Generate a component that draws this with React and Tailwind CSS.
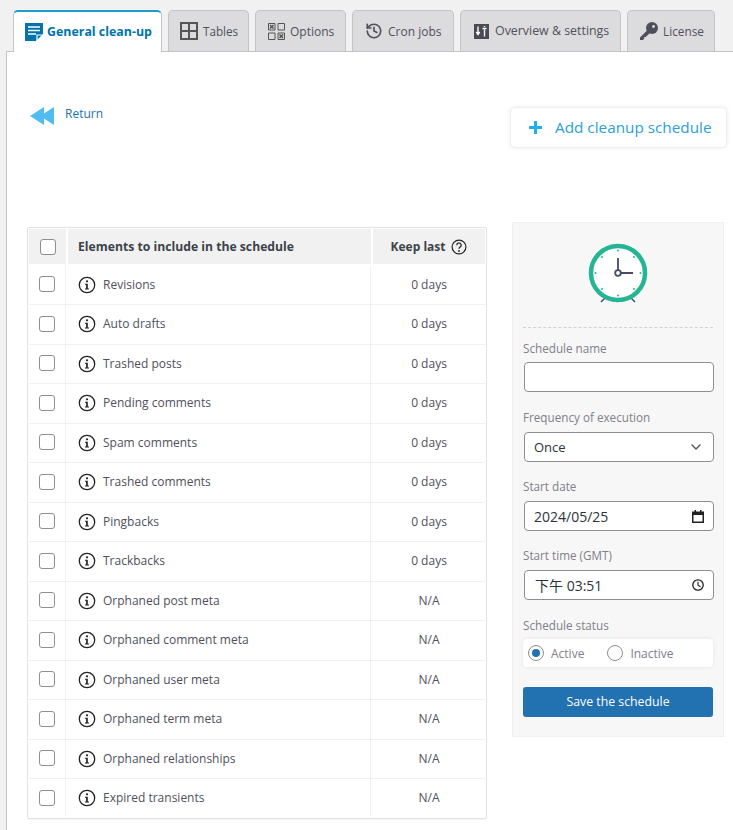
import { ChevronDown, History } from "lucide-react";

const tableRows = [
  ["Revisions", "0 days"],
  ["Auto drafts", "0 days"],
  ["Trashed posts", "0 days"],
  ["Pending comments", "0 days"],
  ["Spam comments", "0 days"],
  ["Trashed comments", "0 days"],
  ["Pingbacks", "0 days"],
  ["Trackbacks", "0 days"],
  ["Orphaned post meta", "N/A"],
  ["Orphaned comment meta", "N/A"],
  ["Orphaned user meta", "N/A"],
  ["Orphaned term meta", "N/A"],
  ["Orphaned relationships", "N/A"],
  ["Expired transients", "N/A"],
];

const DocIcon = () => (
  <svg width="18" height="18" viewBox="0 0 18 18" className="shrink-0">
    <path d="M0 0h18v11l-7 7H0z" fill="#0073aa" />
    <path d="M3 4h12M3 7.500h12M3 11h8" stroke="#fff" strokeWidth="1.400" />
    <path d="M12 18v-6h6" fill="none" stroke="#fff" strokeWidth="1.200" />
  </svg>
);

const TableIcon = () => (
  <svg width="18" height="18" viewBox="0 0 18 18" className="shrink-0">
    <path d="M1 1h16v16H1zM9 1v16M1 9h16" fill="none" stroke="#555" strokeWidth="2" />
  </svg>
);

const OptionsIcon = () => (
  <svg width="17" height="17" viewBox="0 0 17 17" className="shrink-0">
    <path d="M.5.5h6.500v6.500H.5zM10 .5h6.500v6.500H10zM.5 10h6.500v6.500H.5zM10 10h6.500v6.500H10z" fill="none" stroke="#555" />
    <path d="M2 2l3.500 3.500M5.500 2L2 5.500M11.500 11.500l3.500 3.500M15 11.500L11.500 15" stroke="#555" strokeWidth="1.600" />
  </svg>
);

const SlidersIcon = () => (
  <svg width="15" height="15" viewBox="0 0 15 15" className="shrink-0">
    <path d="M0 0h15v15H0z" fill="#4a4a55" />
    <path d="M4 2.500v7M2.300 8l1.700 2.500L5.700 8M10.500 5.500v7M8.500 4.500h4M10.500 2v1" fill="none" stroke="#fff" strokeWidth="1.400" />
  </svg>
);

const KeyIcon = () => (
  <svg width="18" height="18" viewBox="0 0 18 18" className="shrink-0">
    <circle cx="12" cy="6" r="6" fill="#4f4f5c" />
    <circle cx="13.500" cy="4.500" r="1.400" fill="#dcdcde" />
    <path d="M8.500 7L0 15.500V18h3l1.200-1.500v-1.500h1.500L11 10z" fill="#4f4f5c" />
  </svg>
);

const InfoIcon = () => (
  <svg width="18" height="18" viewBox="0 0 18 18" className="shrink-0">
    <circle cx="9" cy="9" r="7.700" fill="none" stroke="#222" strokeWidth="1.300" />
    <circle cx="9" cy="5.300" r="1.100" fill="#222" />
    <path d="M7 7.800h2.800v4.700H11v1H7v-1h1.100V8.800H7z" fill="#222" />
  </svg>
);

const HelpIcon = () => (
  <svg width="16" height="16" viewBox="0 0 16 16" className="shrink-0">
    <circle cx="8" cy="8" r="6.900" fill="none" stroke="#222" strokeWidth="1.200" />
    <path d="M5.800 6.200a2.200 2.200 0 1 1 3.400 1.800c-.8.500-1.200 1-1.200 1.800" fill="none" stroke="#222" strokeWidth="1.300" />
    <circle cx="8" cy="12" r=".9" fill="#222" />
  </svg>
);

const ReturnIcon = () => (
  <svg width="24" height="18" viewBox="0 0 24 18">
    <path d="M0 9l14-9v18z" fill="#4fbdf2" />
    <path d="M10 9l14-9v18z" fill="#4fbdf2" />
  </svg>
);

const CalendarIcon = () => (
  <svg width="12" height="13" viewBox="0 0 12 13">
    <path d="M0 1.500h12V13H0z" fill="#222" />
    <path d="M1.500 5h9v6.500h-9z" fill="#fff" />
    <path d="M2.500 0h1.500v2H2.500zM8 0h1.500v2H8z" fill="#222" />
  </svg>
);

const TimeIcon = () => (
  <svg width="12" height="12" viewBox="0 0 12 12">
    <circle cx="6" cy="6" r="5.200" fill="none" stroke="#222" strokeWidth="1.300" />
    <path d="M6 2.800v3.400l2.500 1.500" fill="none" stroke="#222" strokeWidth="1.100" />
  </svg>
);

const ClockPicture = () => {
  const ticks = [0, 45, 90, 135, 180, 225, 270, 315];
  return (
    <svg width="64" height="64" viewBox="0 0 64 64">
      <path d="M19 56l-4 4M45 56l4 4" stroke="#474a6b" strokeWidth="1.500" fill="none" />
      <circle cx="32" cy="31" r="27" fill="#fff" stroke="#26b594" strokeWidth="4.500" />
      {ticks.map((t) => (
        <circle
          key={t}
          cx={32 + 22.500 * Math.sin((t * Math.PI) / 180)}
          cy={31 - 22.500 * Math.cos((t * Math.PI) / 180)}
          r="1"
          fill="#26b594"
        />
      ))}
      <path d="M32 16v12M35 31h12" stroke="#474a6b" strokeWidth="1.800" />
      <circle cx="32" cy="31" r="2.800" fill="#fff" stroke="#474a6b" strokeWidth="1.800" />
    </svg>
  );
};

const Tab = ({ icon, label, className }) => (
  <div
    className={
      "h-[41px] mr-[6px] flex items-center gap-[5px] bg-[#dcdcde] border border-b-0 border-[#c3c4c7] rounded-t-[5px] text-[#50505c] " +
      className
    }
  >
    {icon}
    <span className="pt-[1px]">{label}</span>
  </div>
);

const Checkbox = () => (
  <div className="w-4 h-4 bg-white border border-[#8c8f94] rounded-[3px]" />
);

const FieldLabel = ({ children, className }) => (
  <div className={"text-[11.700px] leading-[16px] text-[#80808a] " + className}>{children}</div>
);

const Field = ({ children, className }) => (
  <div
    className={
      "h-[30px] ml-[1px] -mr-[1px] pl-[9px] pr-[9px] flex items-center justify-between bg-white border border-[#8c8f94] rounded-[4px] text-[13px] text-[#2c3338] " +
      className
    }
  >
    {children}
  </div>
);

export default function App() {
  return (
    <div className="min-h-[830px] bg-[#f1f1f1] pt-[10px] pl-[6px] overflow-hidden font-['Open_Sans',sans-serif] text-[12px]">
      {/* tabs */}
      <div className="flex pl-[7px] h-[41px] relative z-10">
        <div className="h-[42px] w-[149px] mr-[6px] flex items-center gap-[4px] pl-[11px] bg-white border border-b-0 border-[#c3c4c7] border-t-2 border-t-[#1e9bd1] rounded-t-[5px] text-[12.400px] text-[#0073aa] font-bold">
          <DocIcon />
          <span>General clean-up</span>
        </div>
        <Tab icon={<TableIcon />} label="Tables" className="w-[81px] pl-[11px] text-[11.700px]" />
        <Tab icon={<OptionsIcon />} label="Options" className="w-[91px] pl-[12px]" />
        <Tab
          icon={<History size={18} strokeWidth={2.2} color="#50505c" />}
          label="Cron jobs"
          className="w-[102px] pl-[12px]"
        />
        <Tab
          icon={<SlidersIcon />}
          label="Overview & settings"
          className="w-[161px] pl-[13px] gap-[6px] whitespace-nowrap text-[12.400px]"
        />
        <Tab icon={<KeyIcon />} label="License" className="w-[88px] pl-[12px] text-[11.800px]" />
      </div>

      {/* panel */}
      <div className="bg-white border-t border-l border-[#c3c4c7] h-[779px] pl-[20px]">
        <div className="flex justify-between items-start h-[171px] pr-[6px]">
          <div className="flex items-start gap-[11px] pt-[55px] pl-[3px] text-[#2271b1]">
            <ReturnIcon />
            <span className="leading-[16px] -mt-[1px]">Return</span>
          </div>
          <div className="mt-[55px] w-[217px] h-[41px] flex items-center gap-[13px] pl-[18px] bg-white rounded-[5px] border border-[#f0f0f1] shadow-[0_0_4px_rgba(0,0,0,0.08)] text-[15.300px] text-[#2b9fd6]">
            <span className="relative w-[13px] h-[13px] shrink-0">
              <span className="absolute left-[5px] top-0 w-[3px] h-[13px] bg-[#1eb0ea]" />
              <span className="absolute left-0 top-[5px] w-[13px] h-[3px] bg-[#1eb0ea]" />
            </span>
            <span>Add cleanup schedule</span>
          </div>
        </div>

        <div className="flex items-start">
          {/* table */}
          <div className="w-[460px] mt-[4px] border border-[#e2e2e2] p-[1px] rounded-[2px] text-[#50505c] shadow-[0_1px_1px_rgba(0,0,0,0.04)]">
            <div className="flex gap-[2px] h-[35px] font-bold text-[12.200px] text-[#3c434a] mb-[1.500px]">
              <div className="w-[37px] bg-[#f1f1f1] flex items-center justify-center">
                <Checkbox />
              </div>
              <div className="w-[303px] bg-[#f1f1f1] flex items-center pl-[10px] pt-[1px]">
                Elements to include in the schedule
              </div>
              <div className="flex-1 bg-[#f1f1f1] flex items-center justify-center gap-[6px] text-[12px] pt-[1px]">
                <span>Keep last</span>
                <HelpIcon />
              </div>
            </div>
            {tableRows.map(([name, keep], i) => (
              <div
                key={name}
                className={
                  "flex gap-[2px] " +
                  (i < tableRows.length - 1 ? "h-[39.500px] border-b border-[#f1f1f1]" : "h-[38px]")
                }
              >
                <div className="w-[37px] border-r border-[#f1f1f1] flex items-center justify-center -mt-[1px]">
                  <Checkbox />
                </div>
                <div className="w-[303px] border-r border-[#f1f1f1] flex items-center gap-[7px] pl-[10px]">
                  <InfoIcon />
                  <span>{name}</span>
                </div>
                <div className="flex-1 flex items-center justify-center">{keep}</div>
              </div>
            ))}
          </div>

          {/* schedule form */}
          <div className="ml-[25px] w-[212px] h-[515px] -mt-[1px] bg-[#f7f7f7] border border-[#f0f0f1] px-[10px]">
            <div className="flex justify-center pt-[19px] pb-[21px] border-b border-dashed border-[#d2d2d2] mb-[12px]">
              <ClockPicture />
            </div>
            <FieldLabel className="mb-[6px]">Schedule name</FieldLabel>
            <Field className="mb-[17px]" />
            <FieldLabel className="mb-[7px]">Frequency of execution</FieldLabel>
            <Field className="mb-[16px]">
              <span className="pt-[1px]">Once</span>
              <ChevronDown size={16} color="#50575e" />
            </Field>
            <FieldLabel className="mb-[7px]">Start date</FieldLabel>
            <Field className="mb-[16px]">
              <span className="text-[14px]">2024/05/25</span>
              <CalendarIcon />
            </Field>
            <FieldLabel className="mb-[7px]">Start time (GMT)</FieldLabel>
            <Field className="mb-[17px]">
              <span className="text-[14px] pl-[1px] font-['Open_Sans','Noto_Sans_CJK_TC',sans-serif]">下午 03:51</span>
              <TimeIcon />
            </Field>
            <FieldLabel className="mb-[6px]">Schedule status</FieldLabel>
            <div className="h-[28px] flex items-center gap-[23px] px-[5px] bg-white rounded-[4px] shadow-[0_0_4px_rgba(0,0,0,0.08)] text-[#80808a]">
              <div className="flex items-center gap-[7px]">
                <span className="w-4 h-4 rounded-full border border-[#8c8f94] bg-white flex items-center justify-center">
                  <span className="w-2 h-2 rounded-full bg-[#2271b1]" />
                </span>
                <span className="pt-[1px]">Active</span>
              </div>
              <div className="flex items-center gap-[7px]">
                <span className="w-4 h-4 rounded-full border border-[#8c8f94] bg-white" />
                <span className="pt-[1px]">Inactive</span>
              </div>
            </div>
            <div className="mt-[20px] h-[30px] flex items-center justify-center bg-[#2271b1] rounded-[3px] text-white text-[12.300px] pt-[1px]">
              Save the schedule
            </div>
          </div>
        </div>
      </div>
    </div>
  );
}
